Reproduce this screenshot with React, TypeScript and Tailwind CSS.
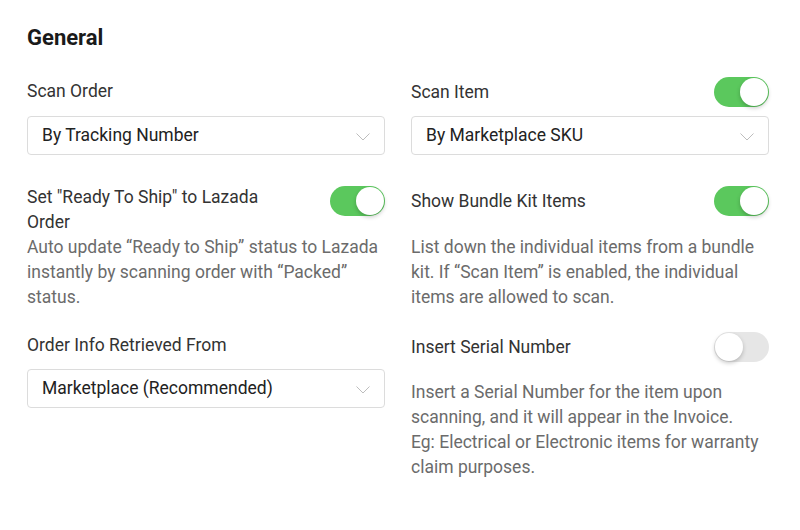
function Toggle({ on }: { on: boolean }) {
  return (
    <div
      className={`relative h-[30px] w-[55px] shrink-0 rounded-full ${on ? 'bg-[#5bc85d]' : 'bg-[#e6e6e6]'}`}
    >
      <span
        className={`absolute top-[1px] h-[28px] w-[28px] rounded-full bg-white shadow-[0_2px_4px_rgba(0,0,0,0.22)] ${on ? 'right-[1px]' : 'left-[1px]'}`}
      />
    </div>
  )
}

function Select({ value }: { value: string }) {
  return (
    <div className="flex h-[39px] items-center justify-between rounded-[4px] border border-[#dcdcdc] bg-white pl-[14px] pr-[14px]">
      <span className="text-[17.5px] text-[#222]">{value}</span>
      <svg width="14" height="8" viewBox="0 0 14 8" fill="none" className="mt-[2px]">
        <polyline points="0.5,0.5 7,7 13.5,0.5" stroke="#bdbdbd" strokeWidth="1" />
      </svg>
    </div>
  )
}

export default function App() {
  return (
    <div className="h-[530px] w-[800px] bg-white pl-[27px] pr-[31px] pt-[24px] font-['Roboto',sans-serif] text-[17.5px]">
      <h2 className="text-[22px] font-bold leading-[28px] text-[#1a1a1a]">General</h2>

      {/* row 1 */}
      <div className="mt-[25px] grid grid-cols-2 gap-x-[26px]">
        <div>
          <div className="flex h-[28px] items-center text-[#333]">Scan Order</div>
          <div className="mt-[11px]">
            <Select value="By Tracking Number" />
          </div>
        </div>
        <div>
          <div className="flex h-[30px] items-center justify-between text-[#333]">
            <span>Scan Item</span>
            <Toggle on />
          </div>
          <div className="mt-[9px]">
            <Select value="By Marketplace SKU" />
          </div>
        </div>
      </div>

      {/* row 2 */}
      <div className="mt-[30px] grid grid-cols-2 gap-x-[26px]">
        <div>
          <div className="flex items-start justify-between">
            <span className="w-[250px] leading-[25px] text-[#333]">Set "Ready To Ship" to Lazada Order</span>
            <div className="mt-[1px]">
              <Toggle on />
            </div>
          </div>
          <p className="leading-[25px] text-[#6b6b6b]">
            Auto update “Ready to Ship” status to Lazada
            <br />
            instantly by scanning order with “Packed”
            <br />
            status.
          </p>
        </div>
        <div className="pt-[1px]">
          <div className="flex h-[30px] items-center justify-between text-[#333]">
            <span>Show Bundle Kit Items</span>
            <Toggle on />
          </div>
          <p className="mt-[19px] leading-[25px] text-[#6b6b6b]">
            List down the individual items from a bundle
            <br />
            kit. If “Scan Item” is enabled, the individual
            <br />
            items are allowed to scan.
          </p>
        </div>
      </div>

      {/* row 3 */}
      <div className="mt-[22px] grid grid-cols-2 gap-x-[26px]">
        <div>
          <div className="flex h-[26px] items-center text-[#333]">Order Info Retrieved From</div>
          <div className="mt-[11px]">
            <Select value="Marketplace (Recommended)" />
          </div>
        </div>
        <div>
          <div className="flex h-[30px] items-center justify-between text-[#333]">
            <span>Insert Serial Number</span>
            <Toggle on={false} />
          </div>
          <p className="mt-[18px] leading-[25px] text-[#6b6b6b]">
            Insert a Serial Number for the item upon
            <br />
            scanning, and it will appear in the Invoice.
            <br />
            Eg: Electrical or Electronic items for warranty
            <br />
            claim purposes.
          </p>
        </div>
      </div>
    </div>
  )
}
